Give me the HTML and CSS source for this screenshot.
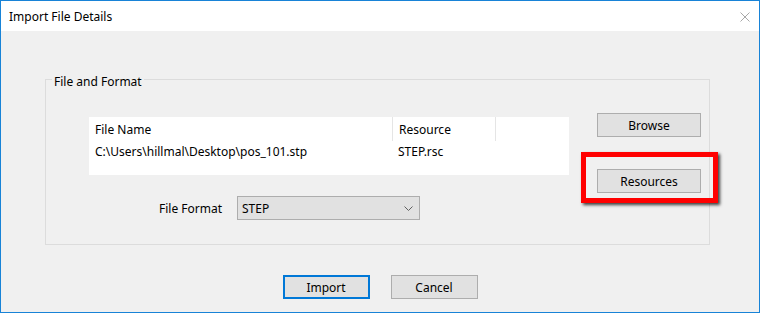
FILE: index.html
```html
<!DOCTYPE html>
<html lang="en">
<head>
    <meta charset="UTF-8">
    <title>Import File Details</title>
    <link rel="stylesheet" href="styles.css">
</head>
<body>
    <div class="window">
        <div class="titlebar">
            <span class="title">Import File Details</span>
            <svg class="close" width="10" height="10" viewBox="0 0 10 10">
                <path d="M0.5 0.5 L9.5 9.5 M9.5 0.5 L0.5 9.5" stroke="#a8a8a8" stroke-width="1" fill="none"/>
            </svg>
        </div>

        <div class="content">
            <fieldset class="group">
                <legend>File and Format</legend>
                <div class="group-body">
                    <div class="left">
                        <div class="files">
                            <div class="row head">
                                <div class="col-name">File Name</div>
                                <div class="col-res">Resource</div>
                                <div class="col-rest"></div>
                            </div>
                            <div class="row">
                                <div class="col-name">C:\Users\hillmal\Desktop\pos_101.stp</div>
                                <div class="col-res">STEP.rsc</div>
                                <div class="col-rest"></div>
                            </div>
                        </div>

                        <div class="format-row">
                            <label class="format-label">File Format</label>
                            <div class="combo">
                                <span>STEP</span>
                                <svg width="9" height="5" viewBox="0 0 9 5">
                                    <path d="M0.5 0.5 L4.5 4.5 L8.5 0.5" stroke="#606060" stroke-width="1" fill="none"/>
                                </svg>
                            </div>
                        </div>
                    </div>

                    <div class="right">
                        <button class="btn">Browse</button>
                        <div class="highlight-wrap">
                            <button class="btn">Resources</button>
                            <div class="highlight"></div>
                        </div>
                    </div>
                </div>
            </fieldset>

            <div class="footer">
                <button class="btn btn-default">Import</button>
                <button class="btn">Cancel</button>
            </div>
        </div>
    </div>
</body>
</html>
```

FILE: styles.css
```css
body {
    margin: 0;
    font-family: "Noto Sans", "Open Sans", sans-serif;
    font-size: 12px;
    color: #000;
}
.window {
    width: 760px;
    height: 313px;
    box-sizing: border-box;
    border: 1px solid #1883d7;
    background: #f0f0f0;
    display: flex;
    flex-direction: column;
}
.titlebar {
    height: 30px;
    flex: none;
    background: #fff;
    display: flex;
    align-items: center;
    justify-content: space-between;
    padding: 0 9px 0 8px;
}
.close {
    margin-top: 1px;
}
.content {
    padding: 37px 0 0 44px;
}
.group {
    width: 665px;
    height: 177px;
    box-sizing: border-box;
    margin: 0;
    padding: 0;
    border: 1px solid #dcdcdc;
    min-width: 0;
}
.group legend {
    margin-left: 6px;
    padding: 6px 2px 0;
    line-height: 16px;
}
.group-body {
    display: flex;
    padding: 23px 0 0 43px;
    gap: 28px;
}
.left {
    width: 480px;
}
.files {
    margin-top: 4px;
    width: 480px;
    height: 58px;
    background: #fff;
}
.row {
    display: flex;
    height: 20px;
    align-items: center;
}
.row.head {
    height: 24px;
    align-items: stretch;
}
.row > div {
    box-sizing: border-box;
    padding: 0 6px;
    white-space: nowrap;
}
.row.head > div {
    display: flex;
    align-items: center;
}
.col-name {
    width: 303px;
}
.col-res {
    width: 103px;
}
.col-rest {
    flex: 1;
}
.head .col-res,
.head .col-rest {
    border-left: 1px solid #e5e5e5;
}
.format-row {
    display: flex;
    align-items: center;
    margin: 21px 0 0 70px;
}
.format-label {
    width: 78px;
}
.combo {
    width: 183px;
    height: 24px;
    box-sizing: border-box;
    border: 1px solid #adadad;
    background: #e1e1e1;
    display: flex;
    align-items: center;
    justify-content: space-between;
    padding: 0 6px 0 4px;
}
.right {
    display: flex;
    flex-direction: column;
}
.btn {
    width: 104px;
    height: 24px;
    box-sizing: border-box;
    border: 1px solid #adadad;
    background: #e1e1e1;
    font-family: inherit;
    font-size: 12px;
    color: #000;
    padding: 0;
}
.highlight-wrap {
    position: relative;
    margin-top: 32px;
}
.highlight-wrap .btn {
    display: block;
}
.highlight {
    position: absolute;
    left: -16px;
    top: -17px;
    right: -17px;
    bottom: -10px;
    border: 5px solid #ff0000;
    box-shadow: 2px 2px 3px rgba(0, 0, 0, 0.75);
}
.footer {
    display: flex;
    justify-content: center;
    gap: 21px;
    margin: 30px 0 0 -44px;
}
.footer .btn {
    width: 87px;
}
.btn-default {
    border: 2px solid #0078d7;
}
```
